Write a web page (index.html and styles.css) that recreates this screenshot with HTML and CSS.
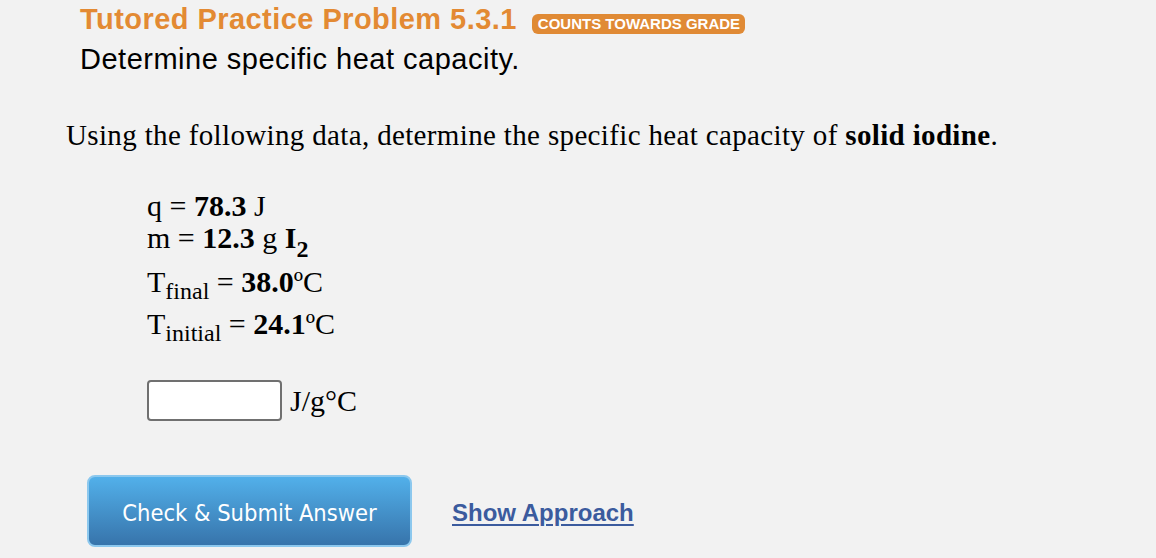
FILE: index.html
```html
<!DOCTYPE html>
<html>
<head>
<meta charset="utf-8">
<link rel="stylesheet" href="styles.css">
</head>
<body>
<div class="page">
  <header class="head">
    <div class="title-row">
      <h1 class="title">Tutored Practice Problem 5.3.1</h1>
      <span class="badge">COUNTS TOWARDS GRADE</span>
    </div>
    <h2 class="subtitle">Determine specific heat capacity.</h2>
  </header>
  <p class="prompt">Using the following data, determine the specific heat capacity of <b>solid iodine</b>.</p>
  <div class="data">
    <div class="line l1">q = <b>78.3</b> J</div>
    <div class="line l2">m = <b>12.3</b> g <b>I<sub class="sub-b">2</sub></b></div>
    <div class="line l3">T<sub>final</sub> = <b>38.0</b>ºC</div>
    <div class="line l4">T<sub>initial</sub> = <b>24.1</b>ºC</div>
  </div>
  <div class="answer">
    <input class="box" type="text">
    <span class="unit">J/g°C</span>
  </div>
  <div class="actions">
    <button class="submit">Check &amp; Submit Answer</button>
    <a class="approach" href="#">Show Approach</a>
  </div>
</div>
</body>
</html>
```
FILE: styles.css
```css
html, body {
  margin: 0;
  padding: 0;
  background: #f2f2f2;
}
.page {
  padding: 0 0 0 66px;
}
.head {
  padding: 3px 0 0 14px;
}
.title-row {
  display: flex;
  align-items: flex-start;
  gap: 15px;
  height: 32px;
}
.title {
  margin: 0;
  font-family: "Liberation Sans", Arial, sans-serif;
  font-weight: bold;
  font-size: 29px;
  letter-spacing: 0.45px;
  color: #e38a33;
  line-height: 32px;
}
.badge {
  margin-top: 11px;
  background: #e08a35;
  color: #fff;
  font-family: "Liberation Sans", Arial, sans-serif;
  font-weight: bold;
  font-size: 15px;
  line-height: 20px;
  height: 20px;
  padding: 0 5px 0 6px;
  border-radius: 6px;
}
.subtitle {
  margin: 8px 0 0 0;
  font-family: "Liberation Sans", Arial, sans-serif;
  font-weight: normal;
  font-size: 29px;
  letter-spacing: 0.5px;
  line-height: 32px;
  color: #000;
}
.prompt {
  margin: 43px 0 0 0;
  font-family: "Liberation Serif", "Times New Roman", serif;
  font-size: 29px;
  letter-spacing: 0.35px;
  line-height: 34px;
  color: #000;
}
.data {
  margin: 37px 0 0 81px;
  font-family: "Liberation Serif", "Times New Roman", serif;
  font-size: 30px;
  color: #000;
}
.line {
  line-height: 34px;
  height: 34px;
}
.l1 { height: 32px; }
.l3 { margin-top: 10px; }
.l4 { margin-top: 8px; }
.data sub {
  font-size: 24px;
  vertical-align: -7px;
  line-height: 0;
}
.data .sub-b {
  font-size: 24px;
  vertical-align: -9px;
}
.answer {
  margin: 39px 0 0 81px;
  display: flex;
  align-items: center;
  gap: 8px;
}
.box {
  width: 135px;
  height: 41px;
  box-sizing: border-box;
  border: 2px solid #707070;
  border-radius: 4px;
  background: #fff;
  margin: 0;
}
.unit {
  font-family: "Liberation Serif", "Times New Roman", serif;
  font-size: 30px;
  line-height: 34px;
  color: #000;
}
.actions {
  margin: 54px 0 0 21px;
  display: flex;
  align-items: center;
  gap: 40px;
}
.submit {
  width: 325px;
  height: 72px;
  box-sizing: border-box;
  border: 2px solid #8cc8ee;
  border-radius: 8px;
  background: linear-gradient(#52b0ea, #3774ab);
  color: #fff;
  font-family: "DejaVu Sans Condensed", "DejaVu Sans", sans-serif;
  font-size: 23.5px;
  padding: 4px 0 0 0;
  margin: 0;
}
.approach {
  font-family: "Liberation Sans", Arial, sans-serif;
  font-weight: bold;
  font-size: 24px;
  color: #3b5b9e;
  text-decoration: underline;
  text-decoration-thickness: 2px;
  text-underline-offset: 3px;
  padding-top: 3px;
}
```
